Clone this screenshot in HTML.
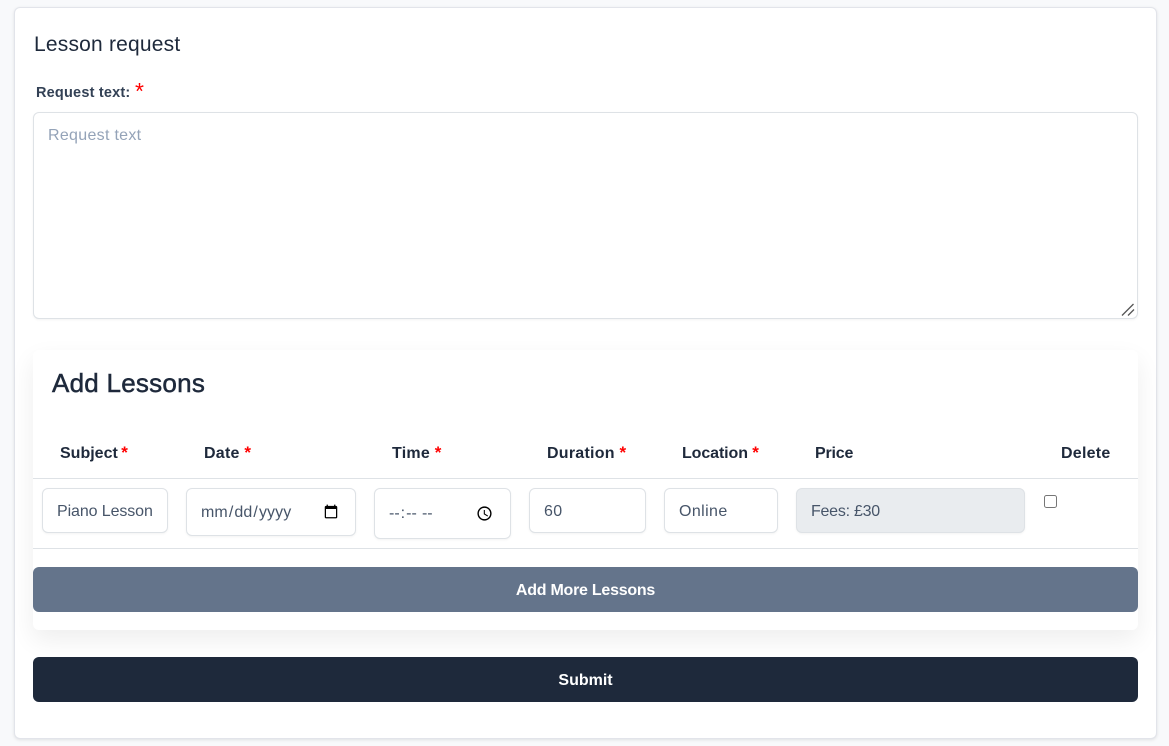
<!DOCTYPE html>
<html lang="en">
<head>
<meta charset="utf-8">
<title>Lesson request</title>
<style>
html,body{margin:0;padding:0;width:1169px;height:746px;overflow:hidden;background:#f8f9fb;}
*{box-sizing:border-box;font-family:"Liberation Sans",Arial,sans-serif;}
.card{position:absolute;left:14px;top:7px;width:1143px;height:732px;background:#fff;border:1px solid #e2e4ea;border-radius:6px;box-shadow:0 1px 3px rgba(0,0,0,.1);}
.t{position:absolute;white-space:nowrap;line-height:20px;}
.r{color:#f00;letter-spacing:0;}
.h{font-size:16px;font-weight:700;color:#1e293b;letter-spacing:.25px;}
.h .r{font-size:17px;}
textarea{position:absolute;left:33px;top:112px;width:1105px;height:207px;border:1px solid #dee2e6;border-radius:6px;padding:13px 14px;font-size:16px;letter-spacing:.3px;line-height:20px;box-shadow:0 1px 2px rgba(0,0,0,.05);outline:none;margin:0;background:#fff;resize:none;}
textarea::placeholder{color:#94a3b8;opacity:1;}
.grip{position:absolute;left:1120px;top:302px;width:16px;height:15px;}
.sub{position:absolute;left:33px;top:350px;width:1105px;height:280px;background:#fff;border-radius:6px;box-shadow:0 10px 25px rgba(0,0,0,.07);}
.line{position:absolute;left:33px;width:1105px;height:1px;background:#dee2e6;}
input{position:absolute;margin:0;background:#fff;border:1px solid #dee2e6;border-radius:6px;padding:2px 14px 0;font-size:16px;color:#475569;letter-spacing:.1px;box-shadow:0 1px 2px rgba(0,0,0,.05);outline:none;}
input[type=date],input[type=time]{padding:0 14px 0 13px;}
input::-webkit-datetime-edit{position:relative;top:1px;}
input[type=checkbox]{left:1044px;top:495px;width:13px;height:13px;padding:0;box-shadow:none;}
.btn{position:absolute;left:33px;width:1105px;height:45px;border-radius:6px;color:#fff;font-size:16px;font-weight:700;text-align:center;line-height:47px;}
</style>
</head>
<body>
<div class="card"></div>
<div class="t" style="left:34px;top:35px;font-size:21px;color:#1e293b;letter-spacing:.2px;">Lesson request</div>
<div class="t" style="left:36px;top:83px;font-size:14.5px;font-weight:700;color:#334155;letter-spacing:.2px;">Request text:</div>
<div class="t r" style="left:135px;top:81px;font-size:23px;">*</div>
<textarea placeholder="Request text"></textarea>
<svg class="grip" viewBox="0 0 16 15"><path d="M2 13.5L13.5 2M8 13.5L14 7.5" stroke="#555" stroke-width="1.3" fill="none"/></svg>

<div class="sub"></div>
<div class="t" style="left:52px;top:367px;font-size:26px;line-height:32px;color:#1e293b;-webkit-text-stroke:.5px #1e293b;letter-spacing:.25px;">Add Lessons</div>

<div class="t h" style="left:60px;top:443px;letter-spacing:0;">Subject <span class="r" style="margin-left:-1px;">*</span></div>
<div class="t h" style="left:204px;top:443px;">Date <span class="r">*</span></div>
<div class="t h" style="left:392px;top:443px;">Time <span class="r">*</span></div>
<div class="t h" style="left:547px;top:443px;">Duration <span class="r">*</span></div>
<div class="t h" style="left:682px;top:443px;letter-spacing:-.1px;">Location <span class="r">*</span></div>
<div class="t h" style="left:815px;top:444px;letter-spacing:-.2px;">Price</div>
<div class="t h" style="left:1061px;top:444px;">Delete</div>

<div class="line" style="top:478px;"></div>
<div class="line" style="top:548px;"></div>

<input type="text" value="Piano Lesson" style="left:42px;top:488px;width:126px;height:45px;padding-right:4px;letter-spacing:-.1px;">
<input type="date" style="left:186px;top:488px;width:170px;height:48px;">
<input type="time" style="left:374px;top:488px;width:137px;height:51px;letter-spacing:-.1px;">
<input type="text" value="60" style="left:529px;top:488px;width:117px;height:45px;letter-spacing:.4px;">
<input type="text" value="Online" style="left:664px;top:488px;width:114px;height:45px;letter-spacing:.4px;">
<input type="text" value="Fees: £30" readonly style="left:796px;top:488px;width:229px;height:45px;background:#e9ecef;letter-spacing:-.25px;">
<input type="checkbox">

<div class="btn" style="top:567px;background:#64748b;letter-spacing:-.25px;">Add More Lessons</div>
<div class="btn" style="top:657px;background:#1e293b;">Submit</div>
</body>
</html>
